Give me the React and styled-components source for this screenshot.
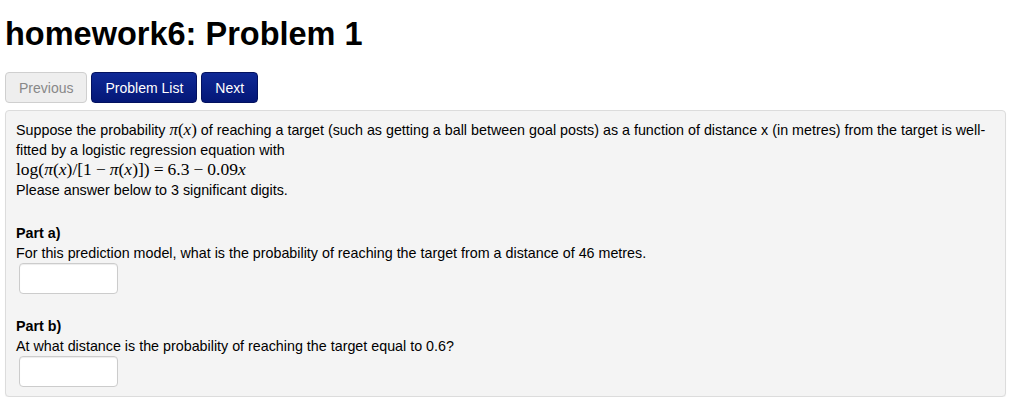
import React from 'react';
import styled, { createGlobalStyle } from 'styled-components';

const GlobalStyle = createGlobalStyle`
  body {
    margin: 0;
    background: #fff;
    font-family: "Liberation Sans", Arial, Helvetica, sans-serif;
    font-size: 14.3px;
    line-height: 20px;
    color: #000;
  }
`;

const Page = styled.div`
  padding: 0 18px 0 5px;
`;

const Title = styled.h1`
  margin: 0;
  padding-top: 17px;
  font-size: 32.5px;
  line-height: 34px;
  font-weight: bold;
`;

const NavBar = styled.div`
  display: flex;
  gap: 4px;
  margin-top: 21px;
`;

const NavButton = styled.a`
  display: inline-block;
  height: 31px;
  box-sizing: border-box;
  padding: 5px 13px;
  border-radius: 4px;
  font-size: 14px;
  line-height: 20px;
  text-decoration: none;
  cursor: pointer;
  color: ${p => (p.disabled ? '#888' : '#fff')};
  background: ${p => (p.disabled ? '#eeeeee' : 'linear-gradient(#0f2996, #041777)')};
  border: 1px solid ${p => (p.disabled ? '#cfcfcf' : '#03115f')};
`;

const ProblemPanel = styled.div`
  margin-top: 7px;
  background: #f4f4f4;
  border: 1px solid #dcdcdc;
  border-radius: 4px;
  box-shadow: 0 1px 1px rgba(0, 0, 0, 0.05);
  padding: 9px 10px 9px 10px;
`;

const Line = styled.div`
  line-height: 20px;
`;

const Math = styled.span`
  font-family: "Liberation Serif", "Times New Roman", serif;
  font-size: ${p => (p.big ? '17.5px' : '17px')};
  line-height: 1;
`;

const Var = styled.i`
  font-style: italic;
`;

const Op = styled.span`
  padding: 0 4px;
`;

const Part = styled.div`
  margin-top: ${p => p.gap || 23}px;
`;

const PartLabel = styled.div`
  font-weight: bold;
  line-height: 20px;
`;

const AnswerInput = styled.input`
  display: block;
  box-sizing: border-box;
  width: 99px;
  height: 31px;
  margin-left: 3px;
  padding: 4px 6px;
  background: #fff;
  border: 1px solid #cccccc;
  border-radius: 4px;
  box-shadow: inset 0 1px 1px rgba(0, 0, 0, 0.075);
  font-family: inherit;
  font-size: 14px;
`;

const Pi = () => <Var>π</Var>;

export default function App() {
  return (
    <>
      <GlobalStyle />
      <Page>
        <Title>homework6: Problem 1</Title>
        <NavBar>
          <NavButton disabled>Previous</NavButton>
          <NavButton>Problem List</NavButton>
          <NavButton>Next</NavButton>
        </NavBar>
        <ProblemPanel>
          <Line>
            Suppose the probability <Math><Pi />(<Var>x</Var>)</Math> of reaching a target (such as getting a ball
            between goal posts) as a function of distance x (in metres) from the target is well-<wbr />fitted by a logistic
            regression equation with
          </Line>
          <Line>
            <Math big>
              log(<Pi />(<Var>x</Var>)/[1<Op>−</Op><Pi />(<Var>x</Var>)])<Op>=</Op>6.3<Op>−</Op>0.09<Var>x</Var>
            </Math>
          </Line>
          <Line>Please answer below to 3 significant digits.</Line>

          <Part>
            <PartLabel>Part a)</PartLabel>
            <Line>For this prediction model, what is the probability of reaching the target from a distance of 46 metres.</Line>
            <AnswerInput type="text" />
          </Part>

          <Part gap={22}>
            <PartLabel>Part b)</PartLabel>
            <Line>At what distance is the probability of reaching the target equal to 0.6?</Line>
            <AnswerInput type="text" />
          </Part>
        </ProblemPanel>
      </Page>
    </>
  );
}
